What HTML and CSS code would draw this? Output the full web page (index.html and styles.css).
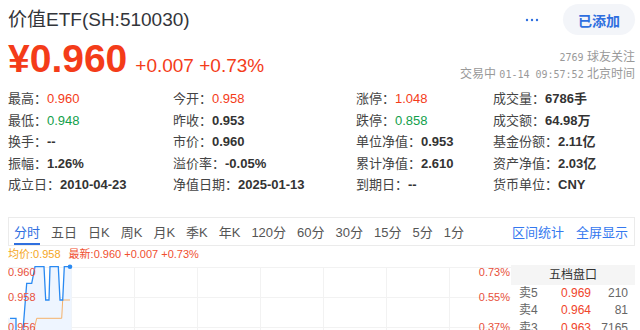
FILE: index.html
```html
<!DOCTYPE html>
<html lang="zh-CN">
<head>
<meta charset="utf-8">
<title>价值ETF</title>
<link rel="stylesheet" href="styles.css">
</head>
<body>
<div class="page">
  <header class="top">
    <h1 class="title">价值ETF(SH:510030)</h1>
    <div class="actions">
      <span class="more"><svg width="14" height="4" viewBox="0 0 14 4"><circle cx="2" cy="2" r="1.2"/><circle cx="7" cy="2" r="1.2"/><circle cx="12" cy="2" r="1.2"/></svg></span>
      <button class="added">已添加</button>
    </div>
  </header>

  <div class="quote">
    <div class="price-wrap"><span class="price">¥0.960</span><span class="change">+0.007 +0.73%</span></div>
    <div class="meta">
      <div><span class="num">2769</span> 球友关注</div>
      <div>交易中 <span class="num">01-14 09:57:52</span> 北京时间</div>
    </div>
  </div>

  <div class="stats">
    <div><span class="label">最高：</span><span class="val up">0.960</span></div>
    <div><span class="label">今开：</span><span class="val up">0.958</span></div>
    <div><span class="label">涨停：</span><span class="val up">1.048</span></div>
    <div><span class="label">成交量：</span><span class="val">6786手</span></div>

    <div><span class="label">最低：</span><span class="val down">0.948</span></div>
    <div><span class="label">昨收：</span><span class="val">0.953</span></div>
    <div><span class="label">跌停：</span><span class="val down">0.858</span></div>
    <div><span class="label">成交额：</span><span class="val">64.98万</span></div>

    <div><span class="label">换手：</span><span class="val">--</span></div>
    <div><span class="label">市价：</span><span class="val">0.960</span></div>
    <div><span class="label">单位净值：</span><span class="val">0.953</span></div>
    <div><span class="label">基金份额：</span><span class="val">2.11亿</span></div>

    <div><span class="label">振幅：</span><span class="val">1.26%</span></div>
    <div><span class="label">溢价率：</span><span class="val">-0.05%</span></div>
    <div><span class="label">累计净值：</span><span class="val">2.610</span></div>
    <div><span class="label">资产净值：</span><span class="val">2.03亿</span></div>

    <div><span class="label">成立日：</span><span class="val">2010-04-23</span></div>
    <div><span class="label">净值日期：</span><span class="val">2025-01-13</span></div>
    <div><span class="label">到期日：</span><span class="val">--</span></div>
    <div><span class="label">货币单位：</span><span class="val">CNY</span></div>
  </div>

  <nav class="tabs">
    <span class="tab active">分时</span>
    <span class="tab">五日</span>
    <span class="tab">日K</span>
    <span class="tab">周K</span>
    <span class="tab">月K</span>
    <span class="tab">季K</span>
    <span class="tab">年K</span>
    <span class="tab">120分</span>
    <span class="tab">60分</span>
    <span class="tab">30分</span>
    <span class="tab">15分</span>
    <span class="tab">5分</span>
    <span class="tab">1分</span>
    <span class="tools"><span class="tool">区间统计</span><span class="tool">全屏显示</span></span>
  </nav>

  <div class="legend"><span class="avg">均价:0.958</span><span class="latest">最新:0.960 +0.007 +0.73%</span></div>

  <div class="chart-row">
    <div class="chart">
      <svg class="chart-svg" width="503" height="68" viewBox="0 0 503 68">
        <g class="grid">
          <line x1="0" y1="5.5" x2="503" y2="5.5"/>
          <line x1="0" y1="35.5" x2="503" y2="35.5"/>
          <line x1="0" y1="65.5" x2="503" y2="65.5"/>
          <line x1="63.5" y1="5" x2="63.5" y2="68"/>
          <line x1="126.5" y1="5" x2="126.5" y2="68"/>
          <line x1="189.5" y1="5" x2="189.5" y2="68"/>
          <line x1="252.5" y1="5" x2="252.5" y2="68"/>
          <line x1="315.5" y1="5" x2="315.5" y2="68"/>
          <line x1="378.5" y1="5" x2="378.5" y2="68"/>
          <line x1="441.5" y1="5" x2="441.5" y2="68"/>
        </g>
        <path class="area" d="M0,56.3 H8 V72 H14.7 L18.7,21.3 H23.7 L27,4.7 H36 L37.7,38 H41 L42,4.7 H50.3 L52,38 H54.7 L56.3,4.7 H63.5 V68 H0 Z"/>
        <path class="avg-line" d="M25,72 L28.7,56.3 H53.7 L54.7,38 H62"/>
        <path class="price-line" d="M2,56.3 H8 V72 H14.7 L18.7,21.3 H23.7 L27,4.7 H36 L37.7,38 H41 L42,4.7 H50.3 L52,38 H54.7 L56.3,4.7 H62"/>
        <circle class="dot" cx="62" cy="4.7" r="2.3"/>
        <text class="axis" x="0" y="13.5">0.960</text>
        <text class="axis" x="0" y="38.5">0.958</text>
        <text class="axis" x="0" y="68.5">0.956</text>
        <text class="axis" x="502" y="13.5" text-anchor="end">0.73%</text>
        <text class="axis" x="502" y="38.5" text-anchor="end">0.55%</text>
        <text class="axis" x="502" y="68.5" text-anchor="end">0.37%</text>
      </svg>
    </div>
    <div class="book">
      <div class="book-head">五档盘口</div>
      <div class="book-row"><span>卖5</span><span class="bp">0.969</span><span class="bv">210</span></div>
      <div class="book-row"><span>卖4</span><span class="bp">0.964</span><span class="bv">81</span></div>
      <div class="book-row"><span>卖3</span><span class="bp">0.963</span><span class="bv">7165</span></div>
    </div>
  </div>
</div>
</body>
</html>
```

FILE: styles.css
```css
html, body {
  margin: 0;
  padding: 0;
  background: #fff;
}

body {
  font-family: "Liberation Sans", "Noto Sans CJK SC", sans-serif;
  color: #333;
  width: 640px;
  height: 330px;
  overflow: hidden;
}

.page {
  padding: 0 5px 0 8px;
}

/* header */
.top {
  display: flex;
  justify-content: space-between;
  align-items: center;
  height: 39px;
}

.title {
  margin: 0;
  font-size: 19px;
  font-weight: normal;
  color: #33353a;
  line-height: 24px;
}

.actions {
  display: flex;
  align-items: center;
  gap: 24px;
}

.more {
  display: flex;
  fill: #2f6fdf;
}

.added {
  height: 31px;
  padding: 0 15px;
  border: 0;
  border-radius: 16px;
  background: #f3f5f9;
  color: #2f6fdf;
  font-family: "Liberation Sans", "Noto Sans CJK SC", sans-serif;
  font-size: 14px;
  font-weight: 700;
}

/* quote */
.quote {
  display: flex;
  justify-content: space-between;
  align-items: flex-end;
  height: 40px;
}

.price-wrap {
  display: flex;
  align-items: baseline;
  color: #f43c19;
}

.price {
  font-size: 39px;
  line-height: 40px;
  font-weight: 700;
}

.change {
  font-size: 19px;
  margin-left: 8px;
}

.meta {
  font-size: 12px;
  line-height: 16px;
  color: #999;
  text-align: right;
  margin-bottom: -4px;
}

.num {
  font-family: "DejaVu Sans Mono", monospace;
  font-size: 10px;
}

/* stats */
.stats {
  display: grid;
  grid-template-columns: 165px 183px 137px 1fr;
  grid-auto-rows: 21.5px;
  align-items: center;
  margin-top: 8px;
  font-size: 13px;
}

.label {
  color: #444;
}

.val {
  font-weight: 700;
  color: #333;
}

.val.up {
  color: #f43c19;
  font-weight: 400;
}

.val.down {
  color: #12a04b;
  font-weight: 400;
}

/* tabs */
.tabs {
  margin-top: 22px;
  height: 27px;
  border: 1px solid #ebebeb;
  display: flex;
  align-items: stretch;
  gap: 11px;
  padding: 0 6px 0 5px;
  font-size: 13px;
  color: #555;
}

.tab {
  position: relative;
  display: flex;
  align-items: center;
}

.tab.active {
  color: #2f6fdf;
}

.tab.active::after {
  content: "";
  position: absolute;
  left: 0;
  right: 0;
  bottom: 0;
  height: 2px;
  background: #2f6fdf;
}

.tools {
  margin-left: auto;
  display: flex;
  align-items: center;
  gap: 12px;
  color: #3478ef;
}

/* legend */
.legend {
  display: flex;
  gap: 8px;
  height: 16px;
  line-height: 16px;
  font-size: 11px;
}

.avg {
  color: #f5a623;
}

.latest {
  color: #f0502f;
}

/* chart */
.chart-row {
  display: flex;
  height: 68px;
  overflow: hidden;
}

.chart {
  flex: 1;
}

.chart-svg {
  display: block;
  overflow: hidden;
}

.grid line {
  stroke: #f2f2f2;
  stroke-width: 1;
}

.area {
  fill: #eef5ff;
}

.price-line {
  fill: none;
  stroke: #2a8af2;
  stroke-width: 1.3;
}

.avg-line {
  fill: none;
  stroke: #f5b26b;
  stroke-width: 1;
}

.dot {
  fill: #2a8af2;
}

.axis {
  font-family: "Liberation Sans", sans-serif;
  font-size: 11px;
  fill: #e8503a;
}

/* order book */
.book {
  width: 124px;
  margin-top: 3px;
  font-size: 12px;
}

.book-head {
  height: 20px;
  line-height: 20px;
  text-align: center;
  background: #f5f5f5;
  color: #333;
}

.book-row {
  display: grid;
  grid-template-columns: 42px 1fr auto;
  height: 17.5px;
  line-height: 17.5px;
  padding: 0 7px 0 8px;
  color: #666;
}

.bp {
  color: #f0452b;
}

.bv {
  text-align: right;
}
```
